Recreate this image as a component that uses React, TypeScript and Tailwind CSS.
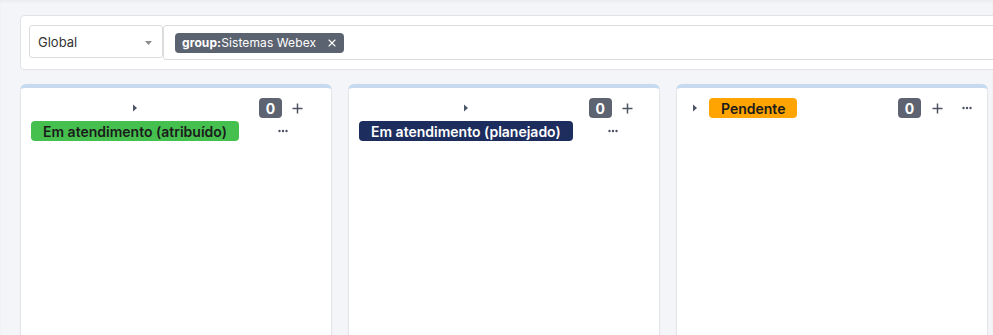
import { X } from 'lucide-react';

interface Column {
  title: string;
  badge: string;
  count: number;
  stacked: boolean;
  gap?: string;
}

const columns: Column[] = [
  { title: 'Em atendimento (atribuído)', badge: 'bg-[#45c04f] text-[#1b1b1b]', count: 0, stacked: true, gap: 'ml-5' },
  { title: 'Em atendimento (planejado)', badge: 'bg-[#1c2d5e] text-white', count: 0, stacked: true, gap: 'ml-[16px]' },
  { title: 'Pendente', badge: 'bg-[#ffa400] text-[#1b1b1b]', count: 0, stacked: false },
];

function Caret() {
  return (
    <svg width="12" height="20" viewBox="0 0 12 20" className="shrink-0">
      <path d="M4 6.5 L8 10 L4 13.5 Z" fill="#4b5567" />
    </svg>
  );
}

function Plus() {
  return (
    <button className="w-5 h-5 flex items-center justify-center text-[#4f5560]">
      <svg width="11" height="11" viewBox="0 0 11 11">
        <path d="M5.5 0.5 V10.5 M0.5 5.5 H10.5" stroke="currentColor" strokeWidth="1.5" />
      </svg>
    </button>
  );
}

function Dots() {
  return (
    <button className="w-5 h-5 flex items-center justify-center">
      <svg width="10" height="4" viewBox="0 0 10 4">
        <circle cx="1.5" cy="2" r="1.2" fill="#4b5160" />
        <circle cx="5" cy="2" r="1.2" fill="#4b5160" />
        <circle cx="8.5" cy="2" r="1.2" fill="#4b5160" />
      </svg>
    </button>
  );
}

function Count({ n }: { n: number }) {
  return (
    <span className="w-[23px] h-5 rounded bg-[#5d6370] text-white text-[14px] font-bold flex items-center justify-center">
      {n}
    </span>
  );
}

function Label({ col }: { col: Column }) {
  return (
    <span className={`h-5 px-3 rounded flex items-center text-[14px] font-semibold whitespace-nowrap ${col.badge}`}>
      {col.title}
    </span>
  );
}

function KanbanColumn({ col }: { col: Column }) {
  return (
    <div className="w-[312px] shrink-0 h-[270px] bg-white border border-[#e3e4e8] border-t-4 border-t-[#c8daef] rounded-t-md">
      {col.stacked ? (
        <div className="flex items-start pl-[10px] pt-[10px]">
          <div className="flex flex-col items-center">
            <Caret />
            <div className="mt-[3px]">
              <Label col={col} />
            </div>
          </div>
          <div className={`${col.gap} flex flex-col items-center`}>
            <div className="flex items-center">
              <Count n={col.count} />
              <span className="ml-1.5">
                <Plus />
              </span>
            </div>
            <div className="mt-[3px]">
              <Dots />
            </div>
          </div>
        </div>
      ) : (
        <div className="flex items-center justify-between pl-3 pr-[10px] pt-[10px]">
          <div className="flex items-center gap-2">
            <Caret />
            <Label col={col} />
          </div>
          <div className="flex items-center">
            <Count n={col.count} />
            <span className="ml-1.5">
              <Plus />
            </span>
            <span className="ml-2.5">
              <Dots />
            </span>
          </div>
        </div>
      )}
    </div>
  );
}

export default function App() {
  return (
    <div className="w-[993px] h-[335px] overflow-hidden bg-[#f4f5f9] font-['Inter',sans-serif] shadow-[inset_0_2px_3px_rgba(0,0,0,0.04)]">
      <div className="w-[1200px] pl-5 pt-[15px]">
        {/* Filter bar */}
        <div className="h-[55px] bg-white border border-[#e2e3e7] rounded flex items-start pl-2 pt-[9px]">
          <div className="w-[134px] h-[33px] border border-[#dcdcdc] rounded-[3px] flex items-center justify-between pl-2 pr-2.5 pt-0.5 text-[13px] text-[#333]">
            <span>Global</span>
            <svg width="7" height="4" viewBox="0 0 7 4">
              <path d="M0 0 H7 L3.5 4 Z" fill="#8c8c8c" />
            </svg>
          </div>
          <div className="flex-1 h-[35px] border border-[#dcdcdc] rounded-[3px] flex items-center pl-[11px]">
            <span className="h-[20px] rounded bg-[#5c6370] text-white text-[12px] tracking-[0.1px] flex items-center pl-[7px] pr-[6px]">
              <span className="font-bold">group:</span>
              <span>Sistemas Webex</span>
              <X className="w-3 h-3 ml-[10px]" strokeWidth={2.2} />
            </span>
          </div>
        </div>

        {/* Board */}
        <div className="flex gap-4 mt-[14px]">
          {columns.map((col) => (
            <KanbanColumn key={col.title} col={col} />
          ))}
        </div>
      </div>
    </div>
  );
}
